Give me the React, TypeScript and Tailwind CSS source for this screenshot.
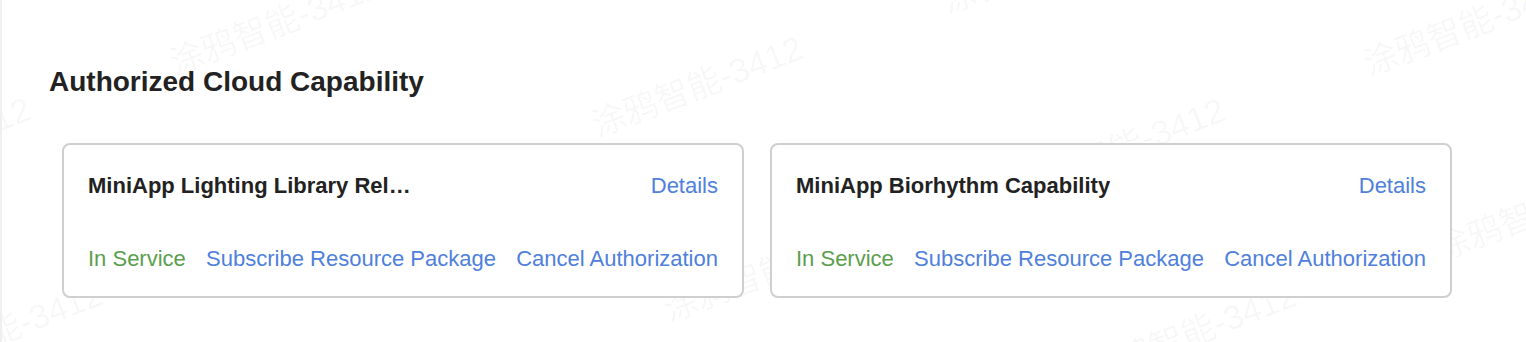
import React from 'react';

const font = { fontFamily: '"Liberation Sans", Arial, Helvetica, sans-serif' };

interface Capability {
  name: string;
  status: string;
}

const capabilities: Capability[] = [
  { name: 'MiniApp Lighting Library Release', status: 'In Service' },
  { name: 'MiniApp Biorhythm Capability', status: 'In Service' },
];

// faint tiled watermark, lattice measured from the screenshot
const marks: { x: number; y: number }[] = [];
for (let i = -2; i < 5; i++) {
  for (let j = -2; j < 3; j++) {
    marks.push({ x: 175 + i * 422 + j * 72, y: 80 + i * 62 + j * 185 });
  }
}

function Watermark() {
  return (
    <div className="pointer-events-none absolute inset-0 overflow-hidden">
      {marks.map((m, k) => (
        <span
          key={k}
          className="absolute origin-bottom-left -rotate-[21deg] whitespace-nowrap text-[34px] leading-[34px] text-black/[0.04]"
          style={{
            left: m.x,
            top: m.y - 34,
            fontFamily: '"Liberation Sans", "Noto Sans CJK SC", sans-serif',
          }}
        >
          涂鸦智能-3412
        </span>
      ))}
    </div>
  );
}

function CapabilityCard({ item }: { item: Capability }) {
  return (
    <div className="flex w-[682px] flex-col gap-[43px] rounded-lg border-2 border-[#cfcfcf] bg-white px-6 pb-[22px] pt-[26px]">
      <div className="flex h-[30px] items-center justify-between leading-[30px]">
        <span className="max-w-[326px] truncate text-[22px] font-bold text-[#222]">{item.name}</span>
        <a className="text-[22px] text-[#4e80dc]">Details</a>
      </div>
      <div className="flex h-[30px] items-center justify-between text-[22px] leading-[30px]">
        <span className="text-[#5a9e4e]">{item.status}</span>
        <a className="text-[#4e80dc]">Subscribe Resource Package</a>
        <a className="text-[#4e80dc]">Cancel Authorization</a>
      </div>
    </div>
  );
}

export default function App() {
  return (
    <div className="relative h-[342px] w-full overflow-hidden border-l-2 border-[#efefef] bg-white" style={font}>
      <Watermark />
      <div className="relative pl-[47px] pt-[66px]">
        <h2 className="text-[28px] font-bold leading-[32px] text-[#222]">Authorized Cloud Capability</h2>
        <div className="ml-[13px] mt-[45px] flex gap-[26px]">
          {capabilities.map((c) => (
            <CapabilityCard key={c.name} item={c} />
          ))}
        </div>
      </div>
    </div>
  );
}
